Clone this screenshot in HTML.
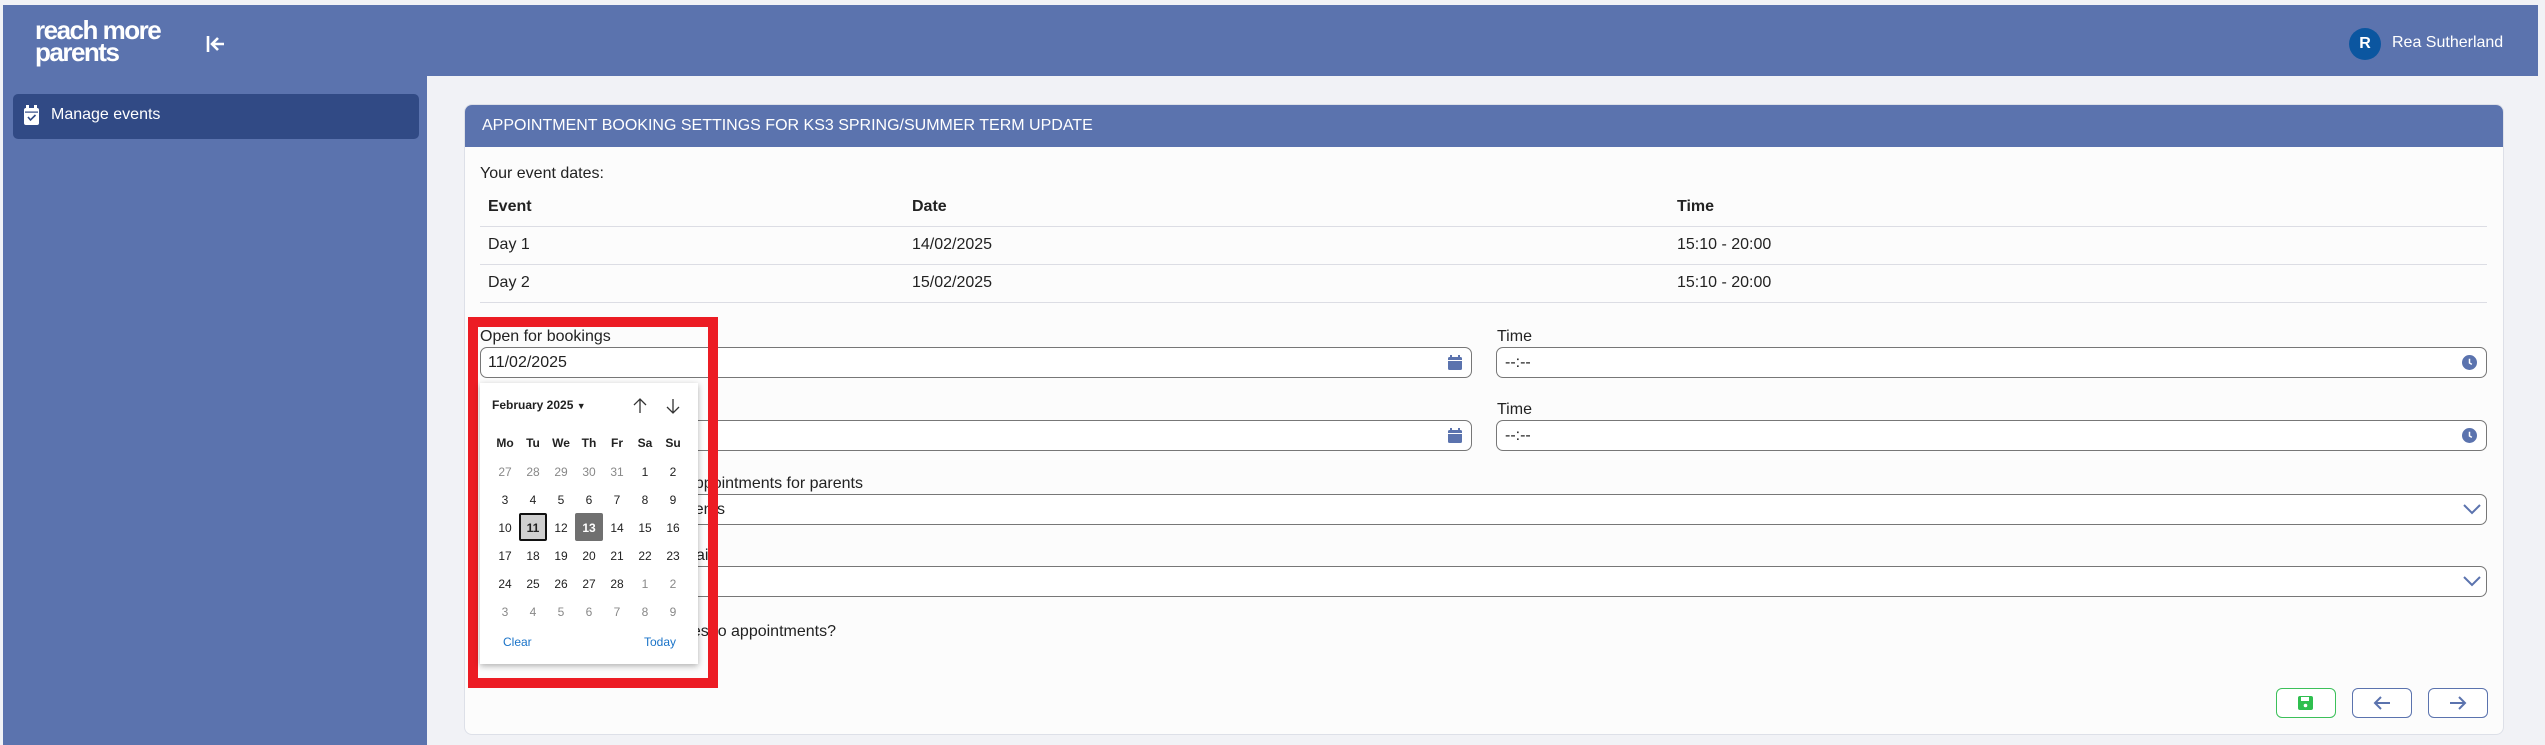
<!DOCTYPE html>
<html><head><meta charset="utf-8">
<style>
*{box-sizing:border-box;margin:0;padding:0}
body{width:2545px;height:745px;overflow:hidden;background:#f1f2f6;font-family:"Liberation Sans",sans-serif;position:relative;color:#222}
.a{position:absolute}
.hdr{left:3px;top:5px;width:2535px;height:71px;background:#5b73ae}
.side{left:3px;top:76px;width:424px;height:669px;background:#5b73ae}
.card{left:464px;top:104px;width:2040px;height:631px;background:#fcfcfc;border:1px solid #dde0e8;border-radius:8px;overflow:hidden}
.ch{left:0;top:0;width:100%;height:42px;background:#5b73ae;color:#fff;font-size:16px;line-height:42px;padding-left:17px}
.t{font-size:16px;white-space:nowrap}
.line{height:1px;background:#dcdde4}
.inp{border:1px solid #777;border-radius:7px;background:#fff;height:31px}
.lbl{font-size:16px;white-space:nowrap}
.cal{left:480px;top:383px;width:218px;height:281px;background:#fff;box-shadow:0 2px 6px rgba(0,0,0,.3);font-size:12px}
.cal .d{position:absolute;width:28px;text-align:center;line-height:28px;font-size:12px}
.g{color:#888}
.btn{border-radius:6px;background:#fff;height:30px;width:60px}
</style></head><body>
<div class="a hdr"></div>
<div class="a" style="left:35px;top:19px;color:#fff;font-weight:bold;font-size:26px;line-height:22px;letter-spacing:-1.5px">reach more<br>parents</div>
<svg class="a" style="left:205px;top:34px" width="22" height="20" viewBox="0 0 22 20"><path d="M3 2v16M19 10H8M13 4l-6 6 6 6" stroke="#fff" stroke-width="2.6" fill="none"/></svg>
<div class="a" style="left:2349px;top:28px;width:32px;height:32px;border-radius:50%;background:#0b56a0;color:#fff;font-weight:bold;text-align:center;line-height:32px;font-size:16px">R</div>
<div class="a t" style="left:2392px;top:34px;color:#fff;font-size:16px">Rea Sutherland</div>
<div class="a side"></div>
<div class="a" style="left:13px;top:94px;width:406px;height:45px;background:#314a85;border-radius:5px"></div>
<svg class="a" style="left:24px;top:105px" width="15" height="20" viewBox="0 0 15 20"><rect x="0" y="3" width="15" height="17" rx="2" fill="#fff"/><rect x="2" y="0" width="3" height="5" fill="#fff"/><rect x="10" y="0" width="3" height="5" fill="#fff"/><rect x="1" y="6.5" width="13" height="1.2" fill="#314a85"/><path d="M4 12l2.5 3 5-5" stroke="#314a85" stroke-width="1.6" fill="none"/></svg>
<div class="a t" style="left:51px;top:106px;color:#fff;font-size:16px">Manage events</div>

<div class="a card">
 <div class="a ch">APPOINTMENT BOOKING SETTINGS FOR KS3 SPRING/SUMMER TERM UPDATE</div>
</div>
<div class="a t" style="left:480px;top:165px">Your event dates:</div>
<div class="a t" style="left:488px;top:198px;font-weight:bold">Event</div>
<div class="a t" style="left:912px;top:198px;font-weight:bold">Date</div>
<div class="a t" style="left:1677px;top:198px;font-weight:bold">Time</div>
<div class="a line" style="left:480px;top:226px;width:2007px"></div>
<div class="a t" style="left:488px;top:236px">Day 1</div>
<div class="a t" style="left:912px;top:236px">14/02/2025</div>
<div class="a t" style="left:1677px;top:236px">15:10 - 20:00</div>
<div class="a line" style="left:480px;top:264px;width:2007px"></div>
<div class="a t" style="left:488px;top:274px">Day 2</div>
<div class="a t" style="left:912px;top:274px">15/02/2025</div>
<div class="a t" style="left:1677px;top:274px">15:10 - 20:00</div>
<div class="a line" style="left:480px;top:302px;width:2007px"></div>

<div class="a lbl" style="left:480px;top:328px">Open for bookings</div>
<div class="a inp" style="left:480px;top:347px;width:992px"></div>
<div class="a t" style="left:488px;top:354px">11/02/2025</div>
<div class="a lbl" style="left:1497px;top:328px">Time</div>
<div class="a inp" style="left:1496px;top:347px;width:991px"></div>
<div class="a t" style="left:1505px;top:354px">--:--</div>

<div class="a lbl" style="left:1497px;top:401px">Time</div>
<div class="a inp" style="left:480px;top:420px;width:992px"></div>
<div class="a inp" style="left:1496px;top:420px;width:991px"></div>
<div class="a t" style="left:1505px;top:427px">--:--</div>

<svg class="a" style="left:1448px;top:355px" width="14" height="15" viewBox="0 0 14 15"><rect x="0" y="2" width="14" height="13" rx="1.5" fill="#5b73ae"/><rect x="2" y="0" width="2" height="4" fill="#5b73ae"/><rect x="10" y="0" width="2" height="4" fill="#5b73ae"/><rect x="0" y="5" width="14" height="1" fill="#fff"/></svg>
<svg class="a" style="left:1448px;top:428px" width="14" height="15" viewBox="0 0 14 15"><rect x="0" y="2" width="14" height="13" rx="1.5" fill="#5b73ae"/><rect x="2" y="0" width="2" height="4" fill="#5b73ae"/><rect x="10" y="0" width="2" height="4" fill="#5b73ae"/><rect x="0" y="5" width="14" height="1" fill="#fff"/></svg>
<svg class="a" style="left:2462px;top:355px" width="15" height="15" viewBox="0 0 16 16"><circle cx="8" cy="8" r="8" fill="#5b73ae"/><path d="M8 4v4.5l2.5 1.5" stroke="#fff" stroke-width="1.6" fill="none"/></svg>
<svg class="a" style="left:2462px;top:428px" width="15" height="15" viewBox="0 0 16 16"><circle cx="8" cy="8" r="8" fill="#5b73ae"/><path d="M8 4v4.5l2.5 1.5" stroke="#fff" stroke-width="1.6" fill="none"/></svg>

<div class="a lbl" style="left:480px;top:475px;width:383px;text-align:right;overflow:hidden">Maximum number of appointments for parents</div>
<div class="a inp" style="left:480px;top:494px;width:2007px"></div>
<div class="a t" style="left:480px;top:501px;width:245px;text-align:right;overflow:hidden">All parents</div>
<svg class="a" style="left:2463px;top:504px" width="18" height="11" viewBox="0 0 18 11"><path d="M1 1l8 8 8-8" stroke="#5b73ae" stroke-width="2" fill="none"/></svg>

<div class="a lbl" style="left:480px;top:547px;width:232px;text-align:right;overflow:hidden">Confirmation email</div>
<div class="a inp" style="left:480px;top:566px;width:2007px"></div>
<svg class="a" style="left:2463px;top:576px" width="18" height="11" viewBox="0 0 18 11"><path d="M1 1l8 8 8-8" stroke="#5b73ae" stroke-width="2" fill="none"/></svg>

<div class="a lbl" style="left:480px;top:623px;width:356px;text-align:right;overflow:hidden">Allow parents to add notes to appointments?</div>

<div class="a btn" style="left:2276px;top:688px;border:1.5px solid #3cc05a"></div>
<svg class="a" style="left:2298px;top:696px" width="15" height="14" viewBox="0 0 15 14"><rect width="15" height="14" rx="2" fill="#2fbf4f"/><rect x="3" y="1" width="8" height="4" fill="#fff"/><circle cx="7.5" cy="9.5" r="1.8" fill="#fff"/></svg>
<div class="a btn" style="left:2352px;top:688px;border:1.5px solid #5b73ae"></div>
<svg class="a" style="left:2373px;top:696px" width="18" height="14" viewBox="0 0 18 14"><path d="M17 7H2M8 1L2 7l6 6" stroke="#5b73ae" stroke-width="2" fill="none"/></svg>
<div class="a btn" style="left:2428px;top:688px;border:1.5px solid #5b73ae"></div>
<svg class="a" style="left:2449px;top:696px" width="18" height="14" viewBox="0 0 18 14"><path d="M1 7h15M10 1l6 6-6 6" stroke="#5b73ae" stroke-width="2" fill="none"/></svg>

<div class="a" style="left:468px;top:317px;width:250px;height:371px;border:10px solid #ec1c24"></div>
<div class="a cal">
 <div class="a" style="left:12px;top:15px;font-weight:bold;font-size:12px">February 2025 <span style="font-size:9px">▼</span></div>
 <svg class="a" style="left:153px;top:15px" width="14" height="16" viewBox="0 0 14 16"><path d="M7 15V1M1 7l6-6 6 6" stroke="#333" stroke-width="1.3" fill="none"/></svg>
 <svg class="a" style="left:186px;top:15px" width="14" height="16" viewBox="0 0 14 16"><path d="M7 1v14M1 9l6 6 6-6" stroke="#333" stroke-width="1.3" fill="none"/></svg>
 <div class="a" style="left:39px;top:130px;width:28px;height:28px;background:#d0d0d0;border:2px solid #111;border-radius:2px"></div>
 <div class="a" style="left:95px;top:130px;width:28px;height:28px;background:#707070;border-radius:2px"></div>
</div>
<div id="days"></div>
<script>
var c=document.querySelector('.cal');
var h=['Mo','Tu','We','Th','Fr','Sa','Su'];
function add(t,col,row,cls,extra){var d=document.createElement('div');d.className='d '+(cls||'');d.textContent=t;d.style.left=(11+col*28)+'px';d.style.top=(row)+'px';if(extra)d.style.cssText+=extra;c.appendChild(d);}
h.forEach(function(x,i){add(x,i,46,'','font-weight:bold');});
var rows=[[27,28,29,30,31,1,2],[3,4,5,6,7,8,9],[10,11,12,13,14,15,16],[17,18,19,20,21,22,23],[24,25,26,27,28,1,2],[3,4,5,6,7,8,9]];
rows.forEach(function(r,ri){r.forEach(function(v,ci){var g=(ri==0&&ci<5)||(ri==4&&ci>4)||ri==5;var ex='';if(ri==2&&ci==1)ex='font-weight:bold';if(ri==2&&ci==3)ex='color:#fff;font-weight:bold';add(v,ci,75+ri*28,g?'g':'',ex);});});
var cl=document.createElement('div');cl.className='a';cl.style.cssText='left:23px;top:252px;color:#1a73c8;font-size:12px';cl.textContent='Clear';c.appendChild(cl);
var td=document.createElement('div');td.className='a';td.style.cssText='left:164px;top:252px;color:#1a73c8;font-size:12px';td.textContent='Today';c.appendChild(td);
</script>
</body></html>
